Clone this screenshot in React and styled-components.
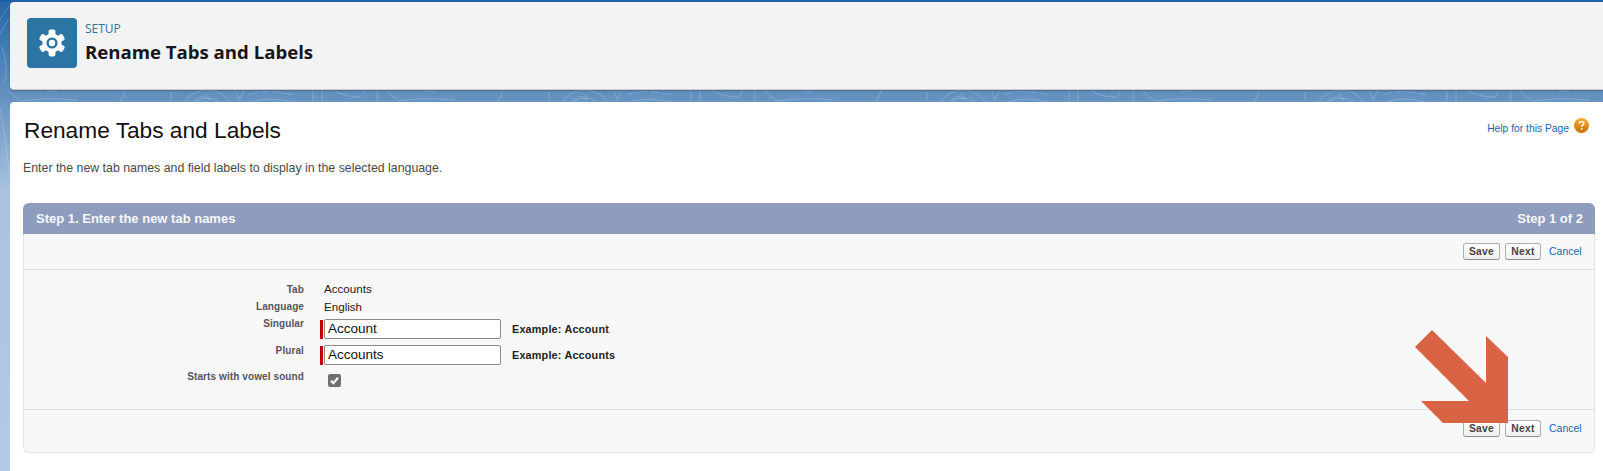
import styled, { createGlobalStyle } from "styled-components";

const tileSvg = `<svg xmlns="http://www.w3.org/2000/svg" width="378" height="471" fill="none" stroke="#fff" stroke-opacity=".18" stroke-width="1">
<g transform="translate(7 0)"><circle cx="200" cy="117" r="27"/><circle cx="200" cy="117" r="19"/>
<path d="M186 102L195 96L203 100L198 93"/><path d="M164 92V101"/><path d="M228 89L232 100L237 90"/>
<path d="M242 95Q258 88 286 95" stroke-dasharray="9 3"/><path d="M245 102Q262 96 285 102"/>
<path d="M305 90Q308 96 305 102"/><path d="M315 90V102"/><path d="M327 90Q335 96 350 97Q358 97 357 90"/>
<path d="M370 90V102"/><path d="M0 89Q7 98 15 101Q40 97 70 100"/><path d="M40 91H50"/><path d="M118 90Q117 96 113 102"/></g>
<path d="M0 20L9 6M0 34L9 18M2 46Q9 70 4 84M0 108Q6 140 9 170"/></svg>`;

const tileUrl = `data:image/svg+xml,${encodeURIComponent(tileSvg)}`;

const GlobalStyle = createGlobalStyle`
  html, body {
    margin: 0;
    padding: 0;
    background: #fff;
  }
`;

const Page = styled.div`
  position: relative;
  height: 471px;
  overflow: hidden;
  padding-left: 10px;
  box-sizing: border-box;
  font-family: "Liberation Sans", Arial, sans-serif;
  background-image: url("${tileUrl}"),
    linear-gradient(#2a66a6 0, #3f79b3 40px, #6592c1 95px, #abc2df 190px, #b3c9e4 471px);
  background-repeat: repeat-x, no-repeat;
  background-position: 0 -2px, 0 0;
  border-top: 2px solid #1f5fa8;
`;

const PageHeader = styled.header`
  height: 88px;
  margin-bottom: 12px;
  box-sizing: border-box;
  display: flex;
  align-items: flex-start;
  gap: 8px;
  padding: 16px 17px 0;
  background: #f3f3f3;
  border-radius: 4px 0 0 4px;
  border-bottom: 1px solid #c9c9c9;
  box-shadow: 0 1px 2px rgba(0, 0, 0, 0.25);
`;

const IconTile = styled.div`
  width: 50px;
  height: 50px;
  flex: none;
  background: #2b75a5;
  border-radius: 4px;
  display: flex;
  align-items: center;
  justify-content: center;
`;

const HeaderText = styled.div`
  font-family: "Open Sans", "Noto Sans", sans-serif;
  display: flex;
  flex-direction: column;
`;

const Eyebrow = styled.span`
  font-size: 12px;
  line-height: 16px;
  margin-top: 3px;
  color: #2b75a5;
`;

const HeaderTitle = styled.h1`
  margin: 3px 0 0;
  font-size: 18.6px;
  line-height: 24px;
  font-weight: 700;
  color: #16161a;
`;

const Main = styled.main`
  background: #fff;
  height: 369px;
  padding: 0 8px 0 13px;
  border-radius: 4px 0 0 0;
`;

const TitleRow = styled.div`
  display: flex;
  justify-content: space-between;
  align-items: flex-start;
  padding-top: 14px;
`;

const PageTitle = styled.h2`
  margin: 0 0 0 1px;
  font-size: 22.7px;
  line-height: 29px;
  font-weight: 400;
  color: #111;
`;

const HelpLink = styled.a`
  display: flex;
  align-items: flex-start;
  gap: 5px;
  margin: 2px 6px 0 0;
  font-size: 10.3px;
  line-height: 15px;
  color: #1a66ad;
`;

const HelpText = styled.span`
  padding-top: 3px;
`;

const Description = styled.p`
  margin: 16px 0 27px;
  font-size: 12.35px;
  line-height: 15px;
  color: #4a4a4a;
`;

const Panel = styled.section`
  border: 1px solid #e3e5e8;
  border-top: 0;
  border-radius: 6px;
  background: #f8f8f8;
  height: 249px;
  display: flex;
  flex-direction: column;
`;

const PanelHead = styled.div`
  height: 31px;
  margin: 0 -1px;
  padding: 0 12px 0 13px;
  display: flex;
  justify-content: space-between;
  align-items: center;
  background: #8e9dbe;
  color: #f6f7fa;
  font-size: 13px;
  font-weight: 700;
  border-radius: 6px 6px 0 0;
`;

const ButtonBar = styled.div`
  height: ${(p) => p.$height}px;
  flex: none;
  box-sizing: border-box;
  display: flex;
  justify-content: flex-end;
  align-items: ${(p) => (p.$bottom ? "flex-start" : "center")};
  padding: ${(p) => (p.$bottom ? "10px" : "0")} 13px 0 0;
  gap: 5px;
  border-${(p) => (p.$bottom ? "top" : "bottom")}: 1px solid #dfdfdf;
`;

const Button = styled.button`
  width: ${(p) => p.$width}px;
  height: 17px;
  padding: 0;
  border: 1px solid #b0b0b0;
  border-bottom-color: #8f8f8f;
  border-radius: 3px;
  background: linear-gradient(#fff, #f0f0f0);
  color: #444;
  font: 700 10.3px "Liberation Sans", Arial, sans-serif;
  letter-spacing: 0.3px;
`;

const CancelLink = styled.a`
  width: 32px;
  font-size: 10.5px;
  color: #1a66ad;
  margin-left: 3px;
  line-height: 17px;
`;

const FormBody = styled.div`
  flex: 1;
  display: grid;
  grid-template-columns: 280px 1fr;
  grid-template-rows: 17px 18px 26px 26px 26px;
  column-gap: 20px;
  align-content: start;
  padding-top: 11px;
`;

const Label = styled.div`
  text-align: right;
  font-size: 10px;
  font-weight: 700;
  line-height: ${(p) => p.$line}px;
  letter-spacing: 0.1px;
  color: #55555f;
`;

const Value = styled.div`
  font-size: 11.6px;
  line-height: ${(p) => p.$line}px;
  color: #222;
`;

const FieldRow = styled.div`
  display: flex;
  align-items: flex-start;
`;

const RequiredBar = styled.span`
  width: 3px;
  height: 19px;
  margin: 4px 1px 0 -4px;
  background: #c00000;
`;

const TextInput = styled.input`
  width: 177px;
  height: 20px;
  margin-top: 3px;
  box-sizing: border-box;
  padding: 0 3px 1px 3px;
  border: 1px solid #8a8a8a;
  border-radius: 2px;
  background: #fff;
  color: #111;
  font: 13.5px "Liberation Sans", Arial, sans-serif;
`;

const Example = styled.span`
  margin: 3px 0 0 11px;
  font-size: 10.8px;
  font-weight: 700;
  line-height: 20px;
  letter-spacing: 0.2px;
  color: #222;
`;

const CheckBox = styled.span`
  display: flex;
  align-items: center;
  justify-content: center;
  width: 13px;
  height: 13px;
  margin: 6px 0 0 4px;
  background: #707070;
  border-radius: 2px;
`;

const ArrowOverlay = styled.svg`
  position: absolute;
  left: 1415px;
  top: 328px;
`;

const Gear = () => (
  <svg width="30" height="30" viewBox="0 0 30 30">
    {[0, 60, 120, 180, 240, 300].map((a) => (
      <rect key={a} x="11.6" y="1.6" width="6.8" height="7" rx="1.8" fill="#fff" transform={`rotate(${a} 15 15)`} />
    ))}
    <circle cx="15" cy="15" r="9.6" fill="#fff" />
    <circle cx="15" cy="15" r="4.4" fill="none" stroke="#2b75a5" strokeWidth="2.4" />
  </svg>
);

const HelpIcon = () => (
  <svg width="15" height="15" viewBox="0 0 15 15">
    <defs>
      <linearGradient id="helpFill" x1="0" y1="0" x2="0" y2="1">
        <stop offset="0" stopColor="#f6ae2d" />
        <stop offset="1" stopColor="#c96f08" />
      </linearGradient>
    </defs>
    <circle cx="7.5" cy="7.5" r="7.5" fill="url(#helpFill)" />
    <path d="M5.2 5.6c.2-1.3 1.2-2 2.4-2 1.3 0 2.2.8 2.2 1.9 0 1.7-2.2 1.6-2.2 3.3" fill="none" stroke="#fff" strokeWidth="1.5" />
    <rect x="6.8" y="10" width="1.6" height="1.6" fill="#fff" />
  </svg>
);

const Check = () => (
  <svg width="11" height="11" viewBox="0 0 11 11">
    <path d="M2 5.8L4.4 8.2L9 2.8" fill="none" stroke="#fff" strokeWidth="2.2" />
  </svg>
);

const Actions = () => (
  <>
    <Button $width={37}>Save</Button>
    <Button $width={36}>Next</Button>
    <CancelLink>Cancel</CancelLink>
  </>
);

export default function App() {
  return (
    <Page>
      <GlobalStyle />
      <PageHeader>
        <IconTile>
          <Gear />
        </IconTile>
        <HeaderText>
          <Eyebrow>SETUP</Eyebrow>
          <HeaderTitle>Rename Tabs and Labels</HeaderTitle>
        </HeaderText>
      </PageHeader>
      <Main>
        <TitleRow>
          <PageTitle>Rename Tabs and Labels</PageTitle>
          <HelpLink>
            <HelpText>Help for this Page</HelpText>
            <HelpIcon />
          </HelpLink>
        </TitleRow>
        <Description>Enter the new tab names and field labels to display in the selected language.</Description>
        <Panel>
          <PanelHead>
            <span>Step 1. Enter the new tab names</span>
            <span>Step 1 of 2</span>
          </PanelHead>
          <ButtonBar $height={36}>
            <Actions />
          </ButtonBar>
          <FormBody>
            <Label $line={17}>Tab</Label>
            <Value $line={16}>Accounts</Value>
            <Label $line={18}>Language</Label>
            <Value $line={18}>English</Value>
            <Label $line={16}>Singular</Label>
            <FieldRow>
              <RequiredBar />
              <TextInput defaultValue="Account" />
              <Example>Example: Account</Example>
            </FieldRow>
            <Label $line={18}>Plural</Label>
            <FieldRow>
              <RequiredBar />
              <TextInput defaultValue="Accounts" />
              <Example>Example: Accounts</Example>
            </FieldRow>
            <Label $line={18}>Starts with vowel sound</Label>
            <FieldRow>
              <CheckBox>
                <Check />
              </CheckBox>
            </FieldRow>
          </FormBody>
          <ButtonBar $height={43} $bottom>
            <Actions />
          </ButtonBar>
        </Panel>
      </Main>
      <ArrowOverlay width="93" height="93" viewBox="0 0 93 93">
        <path d="M17 0L0 17L54 71H6L28 93H93V27L71 6V53Z" fill="#d96345" />
      </ArrowOverlay>
    </Page>
  );
}
